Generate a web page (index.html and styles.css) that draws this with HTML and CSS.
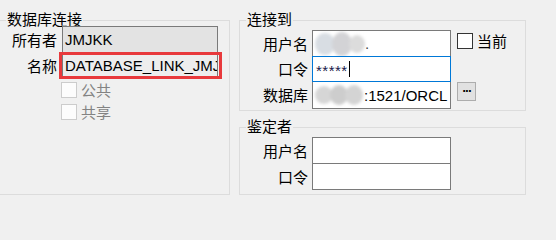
FILE: index.html
```html
<!DOCTYPE html>
<html lang="zh-CN">
<head>
<meta charset="utf-8">
<title>数据库连接</title>
<link rel="stylesheet" href="styles.css">
</head>
<body>
<div class="window">
  <div class="group group-db">
    <div class="group-title">数据库连接</div>
    <div class="form form-db">
      <div class="row">
        <span class="lbl lbl-db">所有者</span>
        <div class="field field-owner">JMJKK</div>
      </div>
      <div class="row row-name">
        <span class="lbl lbl-db lbl-name">名称</span>
        <div class="highlight">
          <div class="field-name">DATABASE_LINK_JMJKK</div>
        </div>
      </div>
      <div class="check check-public"><span class="box box-disabled"></span><span class="check-text disabled">公共</span></div>
      <div class="check check-shared"><span class="box box-disabled"></span><span class="check-text disabled">共享</span></div>
    </div>
  </div>

  <div class="col-right">
    <div class="group group-conn">
      <div class="group-title">连接到</div>
      <div class="form form-right">
        <div class="row">
          <span class="lbl lbl-r lbl-h27">用户名</span>
          <div class="field field-w field-h27">
            <span class="blur blur-user"><i class="b1"></i><i class="b2"></i><i class="b3"></i></span><span class="dot">.</span>
          </div>
          <div class="check check-current"><span class="box"></span><span class="check-text">当前</span></div>
        </div>
        <div class="row row-stack">
          <span class="lbl lbl-r lbl-h26">口令</span>
          <div class="field field-w field-h26 field-focus"><span class="stars">*****</span><span class="caret"></span></div>
        </div>
        <div class="row row-stack">
          <span class="lbl lbl-r lbl-h28">数据库</span>
          <div class="field field-w field-h28">
            <span class="blur blur-db"><i class="d1"></i><i class="d2"></i><i class="d3"></i></span><span class="port">:1521/ORCL</span>
          </div>
          <button class="more" type="button">...</button>
        </div>
      </div>
    </div>

    <div class="group group-auth">
      <div class="group-title">鉴定者</div>
      <div class="form form-right">
        <div class="row">
          <span class="lbl lbl-r lbl-h27">用户名</span>
          <div class="field field-w field-h27"></div>
        </div>
        <div class="row row-stack">
          <span class="lbl lbl-r lbl-h27">口令</span>
          <div class="field field-w field-h27"></div>
        </div>
      </div>
    </div>
  </div>
</div>
</body>
</html>
```

FILE: styles.css
```css
html, body {
  margin: 0;
  padding: 0;
  background: #f0f0f0;
}

body {
  width: 556px;
  height: 204px;
  overflow: hidden;
  font-family: "Noto Sans CJK SC", "Noto Sans", sans-serif;
  font-size: 15px;
  color: #000;
}

.window {
  display: flex;
  align-items: flex-start;
  padding-top: 20px;
}

.group {
  box-sizing: border-box;
  border: 1px solid #dcdcdc;
}

.group-title {
  width: fit-content;
  height: 16px;
  line-height: 16px;
  margin: -10px 0 0 6px;
  padding: 0 1px;
  background: #f0f0f0;
  white-space: nowrap;
}

.group-db {
  width: 231px;
  height: 175px;
  margin-left: -1px;
}

.col-right {
  margin-left: 9px;
  display: flex;
  flex-direction: column;
}

.group-conn {
  width: 287px;
  height: 91px;
}

.group-auth {
  width: 287px;
  height: 68px;
  margin-top: 16px;
}

.form-db {
  margin-top: -1px;
}

.form-right {
  margin-top: 3px;
}

.row {
  display: flex;
  align-items: flex-start;
}

.row-stack {
  margin-top: -1px;
}

.lbl {
  text-align: right;
  white-space: nowrap;
}

.lbl-db {
  width: 57px;
  line-height: 27px;
  height: 27px;
}

.lbl-name {
  margin-top: -1px;
}

.lbl-r {
  width: 68px;
}

.lbl-h26 { height: 26px; line-height: 26px; }
.lbl-h27 { height: 27px; line-height: 27px; }
.lbl-h28 { height: 28px; line-height: 28px; }

.field {
  box-sizing: border-box;
  border: 1px solid #7a7a7a;
  background: #fff;
  font-family: "Liberation Sans", "Noto Sans CJK SC", sans-serif;
  display: flex;
  align-items: center;
  padding-left: 2px;
  overflow: hidden;
  white-space: nowrap;
}

.field-owner {
  margin-left: 5px;
  width: 156px;
  height: 27px;
  background: #e3e3e3;
}

.highlight {
  box-sizing: border-box;
  margin-left: 2px;
  margin-top: -1px;
  width: 163px;
  height: 27px;
  border: 3px solid #e8393c;
}

.field-name {
  box-sizing: border-box;
  width: 156px;
  height: 21px;
  border-left: 1px solid #7a7a7a;
  border-right: 1px solid #7a7a7a;
  background: #ededed;
  padding-left: 2px;
  line-height: 21px;
  font-family: "Liberation Sans", sans-serif;
  white-space: nowrap;
  overflow: hidden;
}

.check {
  display: flex;
  align-items: center;
  height: 16px;
  line-height: 16px;
}

.check-public {
  margin: 3px 0 0 61px;
}

.check-shared {
  margin: 6px 0 0 61px;
}

.box {
  box-sizing: border-box;
  width: 16px;
  height: 16px;
  border: 1px solid #333;
  background: #fff;
  flex: none;
}

.box-disabled {
  border-color: #cccccc;
  background: #fcfcfc;
}

.check-text {
  margin-left: 4px;
  white-space: nowrap;
}

.disabled {
  color: #838383;
}

.field-w {
  margin-left: 4px;
  width: 139px;
}

.field-h26 { height: 26px; }
.field-h27 { height: 27px; }
.field-h28 { height: 28px; }

.field-focus {
  border-color: #0078d7;
  position: relative;
  z-index: 1;
  padding-left: 3px;
}

.stars {
  color: #1a1a4a;
  letter-spacing: 0.5px;
  padding-top: 3px;
}

.caret {
  width: 1px;
  height: 16px;
  background: #000;
  margin-left: 1px;
}

.check-current {
  margin: 3px 0 0 6px;
}

.blur {
  display: inline-flex;
  align-items: center;
  filter: blur(1.5px);
  flex: none;
}

.blur i {
  display: block;
  border-radius: 50%;
}

.blur-user .b1 { width: 20px; height: 22px; background: #d8dde3; }
.blur-user .b2 { width: 20px; height: 24px; background: #d3d3d6; margin-left: -3px; }
.blur-user .b3 { width: 16px; height: 18px; background: #dcdcdc; margin-left: -3px; }

.dot {
  margin-left: 0;
  color: #444;
}

.blur-db .d1 { width: 18px; height: 18px; background: #d6d6d6; }
.blur-db .d2 { width: 18px; height: 20px; background: #cdcdcd; margin-left: -3px; }
.blur-db .d3 { width: 18px; height: 20px; background: #d4d4d4; margin-left: -3px; }

.port {
  margin-left: 1px;
}

.more {
  box-sizing: border-box;
  margin: 1px 0 0 6px;
  width: 19px;
  height: 19px;
  padding: 0 0 6px 0;
  border: 1px solid #adadad;
  background: #e1e1e1;
  font: bold 10px "DejaVu Sans", sans-serif;
  letter-spacing: -1px;
  line-height: 10px;
  color: #000;
  display: flex;
  align-items: center;
  justify-content: center;
}
```
